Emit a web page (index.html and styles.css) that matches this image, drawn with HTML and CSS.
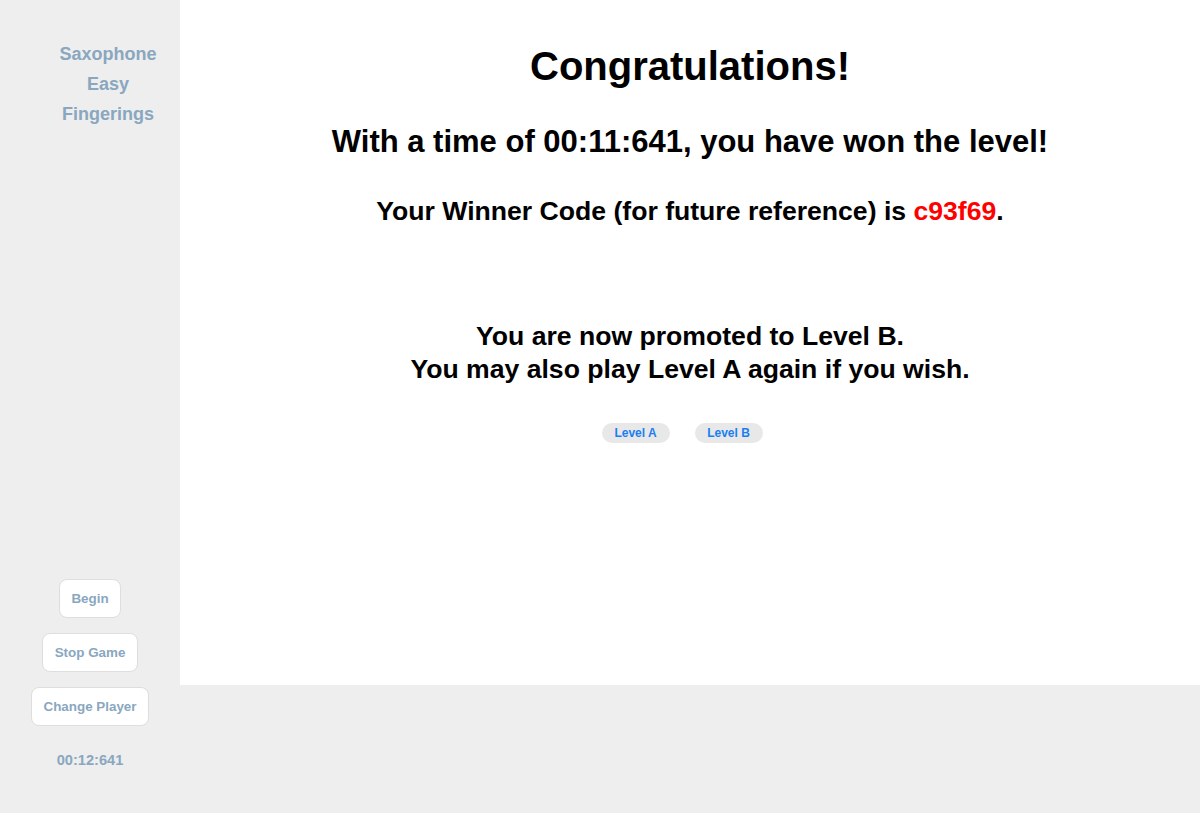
FILE: index.html
```html
<!DOCTYPE html>
<html lang="en">
<head>
<meta charset="utf-8">
<title>Saxophone Easy Fingerings</title>
<link rel="stylesheet" href="styles.css">
</head>
<body>
<div class="app">
  <aside class="sidebar">
    <div class="title">
      <div>Saxophone</div>
      <div>Easy</div>
      <div>Fingerings</div>
    </div>
    <div class="controls">
      <button class="side-btn">Begin</button>
      <button class="side-btn">Stop Game</button>
      <button class="side-btn">Change Player</button>
      <div class="timer">00:12:641</div>
    </div>
  </aside>
  <div class="content">
    <main class="panel">
      <h1 class="congrats">Congratulations!</h1>
      <h2 class="won">With a time of 00:11:641, you have won the level!</h2>
      <p class="code">Your Winner Code (for future reference) is <span class="code-value">c93f69</span>.</p>
      <p class="promo">You are now promoted to Level B.<br>You may also play Level A again if you wish.</p>
      <div class="levels">
        <button class="level-btn">Level A</button>
        <button class="level-btn">Level B</button>
      </div>
    </main>
  </div>
</div>
</body>
</html>
```

FILE: styles.css
```css
html, body {
  margin: 0;
  padding: 0;
}
body {
  background: #eeeeee;
  font-family: "Liberation Sans", Arial, sans-serif;
  width: 1200px;
  height: 813px;
  overflow: hidden;
}
.app {
  display: flex;
  height: 813px;
}
.sidebar {
  width: 180px;
  flex: 0 0 180px;
  display: flex;
  flex-direction: column;
  align-items: center;
  background: #eeeeee;
  color: #89a7bf;
  font-weight: bold;
}
.title {
  padding-top: 39px;
  padding-left: 36px;
  box-sizing: border-box;
  width: 100%;
  text-align: center;
  font-size: 18px;
  line-height: 30px;
}
.controls {
  margin-top: auto;
  padding-bottom: 43px;
  display: flex;
  flex-direction: column;
  align-items: center;
  gap: 15px;
}
.side-btn {
  height: 39px;
  padding: 0 11.5px;
  background: #ffffff;
  border: 1px solid #dedede;
  border-radius: 8px;
  color: #89a7bf;
  font-family: "Liberation Sans", Arial, sans-serif;
  font-weight: bold;
  font-size: 13.4px;
}
.timer {
  margin-top: 9px;
  font-size: 14.6px;
  line-height: 20px;
}
.content {
  flex: 1;
}
.panel {
  background: #ffffff;
  height: 685px;
  box-sizing: border-box;
  padding-top: 43px;
  text-align: center;
  color: #000000;
}
.congrats {
  margin: 0;
  font-size: 40px;
  line-height: 46px;
  font-weight: bold;
}
.won {
  margin: 35px 0 0;
  font-size: 31px;
  line-height: 36px;
  font-weight: bold;
}
.code {
  margin: 36px 0 0;
  font-size: 26.6px;
  line-height: 30px;
  font-weight: bold;
}
.code-value {
  color: #ff0000;
}
.promo {
  margin: 94px 0 0;
  font-size: 26.6px;
  line-height: 33px;
  font-weight: bold;
}
.levels {
  margin-top: 37px;
  display: flex;
  justify-content: center;
  gap: 25px;
  padding-right: 16px;
}
.level-btn {
  width: 68px;
  height: 20px;
  padding: 0;
  border: none;
  border-radius: 10px;
  background: #e8e8e8;
  color: #1a7ff2;
  font-family: "Liberation Sans", Arial, sans-serif;
  font-weight: bold;
  font-size: 12px;
}
```
